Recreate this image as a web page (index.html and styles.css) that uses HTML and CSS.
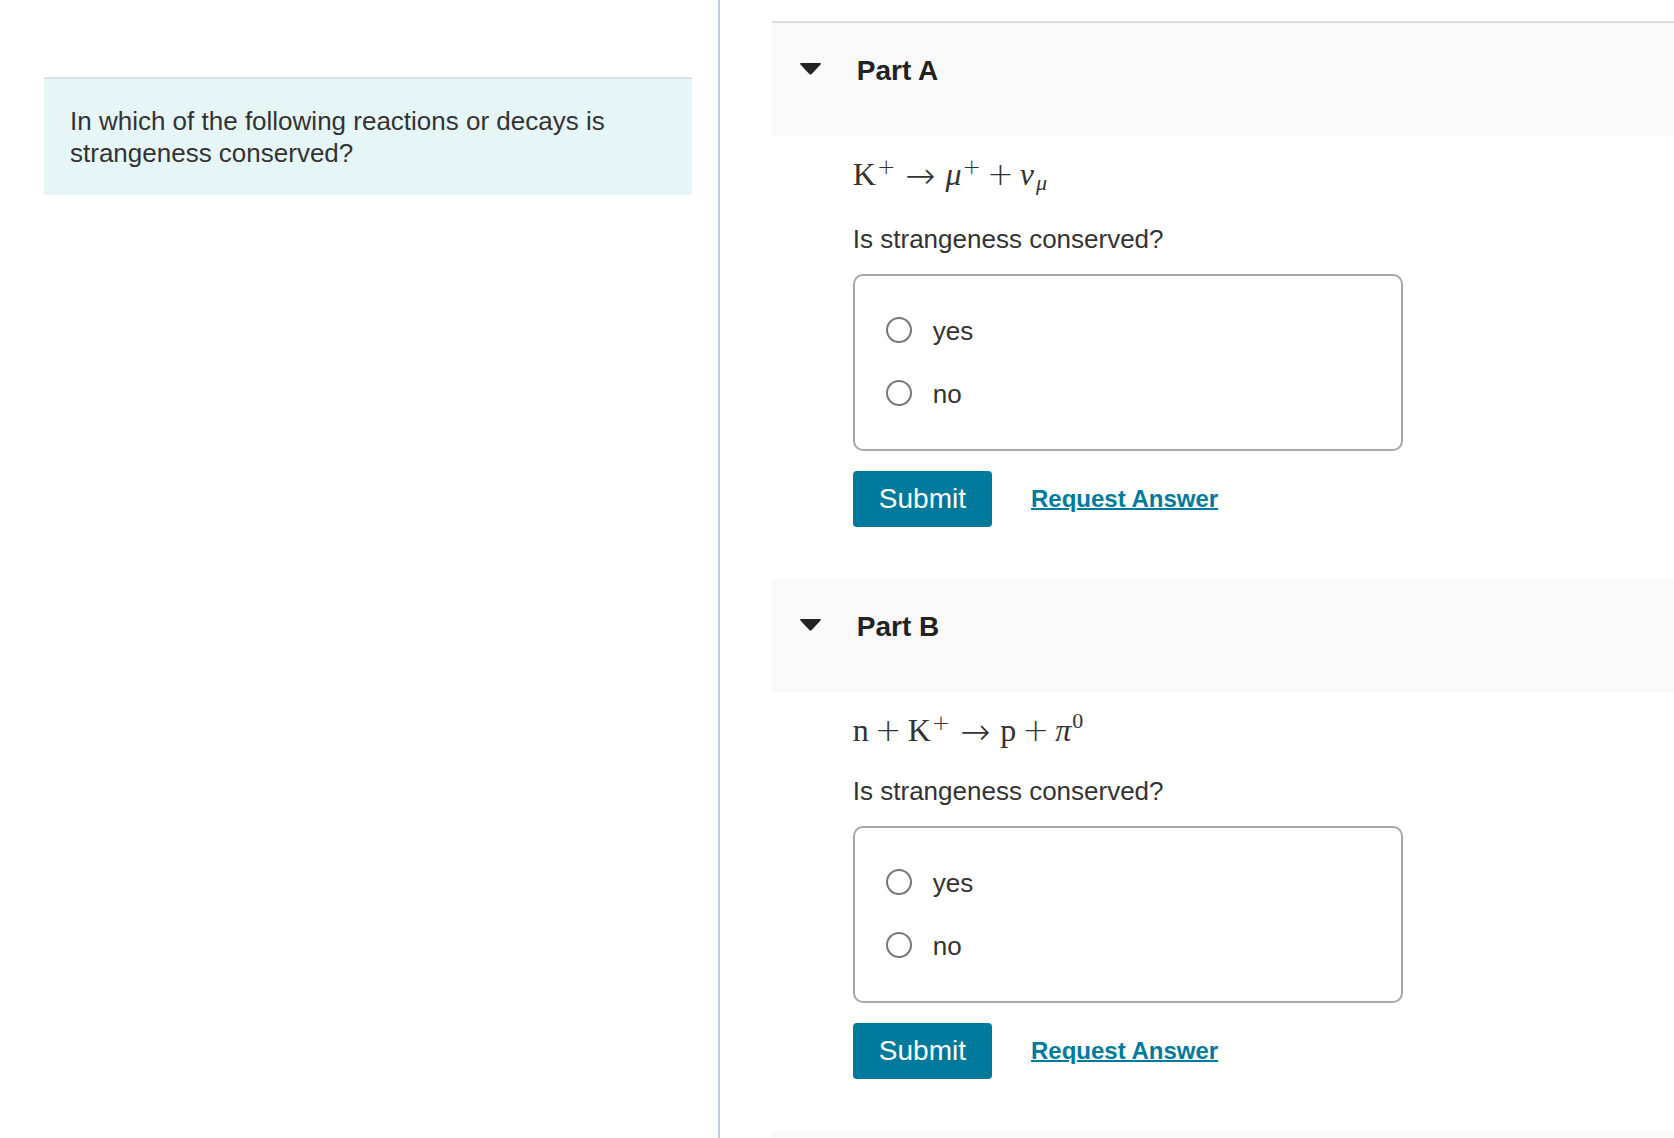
FILE: index.html
```html
<!DOCTYPE html>
<html lang="en">
<head>
<meta charset="utf-8">
<meta name="viewport" content="width=device-width, initial-scale=1">
<title>Strangeness conservation</title>
<link rel="stylesheet" href="styles.css">
</head>
<body>
<div class="layout">
  <aside class="prompt-pane">
    <p class="prompt">In which of the following reactions or decays is strangeness conserved?</p>
  </aside>
  <main class="parts-pane">
    <section class="part">
      <header class="part-header part-header-first">
        <button class="toggle" type="button" aria-label="Collapse Part A" aria-expanded="true">
          <svg class="caret" viewBox="0 0 21 12" aria-hidden="true"><path d="M1 0H20Q21.500 .3 20.500 1.500L11.500 11.200Q10.500 12 9.500 11.200L.5 1.500Q-.5 .3 1 0Z"/></svg>
        </button>
        <h2 class="part-title">Part A</h2>
      </header>
      <div class="part-body">
        <p class="formula formula-sub"><span>K</span><sup class="sign">+</sup><span class="arrow">→</span><i>μ</i><sup class="sign">+</sup><span class="plus">+</span><i>ν</i><sub><i>μ</i></sub></p>
        <form>
          <p class="question" id="question-a">Is strangeness conserved?</p>
          <div class="choices" role="radiogroup" aria-labelledby="question-a">
            <label class="choice"><input class="radio" type="radio" name="a" value="yes">yes</label>
            <label class="choice"><input class="radio" type="radio" name="a" value="no">no</label>
          </div>
          <div class="actions">
            <button class="submit" type="button">Submit</button>
            <a class="request" href="#">Request Answer</a>
          </div>
        </form>
      </div>
    </section>
    <section class="part">
      <header class="part-header">
        <button class="toggle" type="button" aria-label="Collapse Part B" aria-expanded="true">
          <svg class="caret" viewBox="0 0 21 12" aria-hidden="true"><path d="M1 0H20Q21.500 .3 20.500 1.500L11.500 11.200Q10.500 12 9.500 11.200L.5 1.500Q-.5 .3 1 0Z"/></svg>
        </button>
        <h2 class="part-title">Part B</h2>
      </header>
      <div class="part-body">
        <p class="formula"><span>n</span><span class="plus">+</span><span>K</span><sup class="sign">+</sup><span class="arrow">→</span><span>p</span><span class="plus">+</span><i>π</i><sup>0</sup></p>
        <form>
          <p class="question" id="question-b">Is strangeness conserved?</p>
          <div class="choices" role="radiogroup" aria-labelledby="question-b">
            <label class="choice"><input class="radio" type="radio" name="b" value="yes">yes</label>
            <label class="choice"><input class="radio" type="radio" name="b" value="no">no</label>
          </div>
          <div class="actions">
            <button class="submit" type="button">Submit</button>
            <a class="request" href="#">Request Answer</a>
          </div>
        </form>
      </div>
    </section>
    <div class="part-header"></div>
  </main>
</div>
</body>
</html>
```
FILE: styles.css
```css
* {
  box-sizing: border-box;
}

body {
  margin: 0;
  background: #fff;
  color: #333;
  font-family: "Liberation Sans", Arial, sans-serif;
  font-size: 26px;
  line-height: 32px;
}

p,
h2 {
  margin: 0;
}

.layout {
  display: flex;
  height: 100vh;
}

.prompt-pane {
  flex: 0 0 43%;
  padding: 77px 26px 0 44px;
  border-right: 2px solid #b9cbdf;
}

.prompt {
  padding: 26px;
  border-top: 2px solid #ddd;
  background: #e6f6f7;
}

.parts-pane {
  flex: 1;
  min-width: 0;
  padding: 21px 0 0 52px;
  overflow-y: auto;
  scrollbar-width: none;
}

.part-header {
  display: flex;
  align-items: flex-start;
  min-height: 113px;
  padding: 30px 28px;
  background: #f9f9f9;
}

.part-header-first {
  min-height: 115px;
  border-top: 2px solid #ddd;
}

.toggle {
  display: flex;
  align-items: center;
  height: 32px;
  padding: 0;
  border: 0;
  background: none;
  cursor: pointer;
}

.caret {
  width: 21px;
  height: 12px;
  fill: #222;
}

.part-title {
  margin-left: 36px;
  color: #222;
  font-size: 28px;
  line-height: 36px;
}

.part-body {
  padding: 18px 24px 52px 81px;
}

.formula {
  display: flex;
  align-items: baseline;
  margin-bottom: 25px;
  font-family: "Liberation Serif", "Times New Roman", serif;
  font-size: 32px;
  line-height: 40px;
}

.formula-sub {
  padding-bottom: 4px;
}

.formula sup,
.formula sub {
  position: relative;
  font-size: 22px;
  line-height: 0;
  vertical-align: baseline;
}

.formula sup {
  bottom: 13px;
  margin-left: 1px;
}

.formula sub {
  top: 5px;
  margin-left: 2px;
}

.formula .sign,
.plus,
.arrow {
  font-family: "DejaVu Sans", sans-serif;
  font-weight: 200;
  line-height: 0;
}

.formula .sign {
  bottom: 11px;
}

.plus {
  margin: 0 6px;
}

.arrow {
  position: relative;
  top: 3px;
  margin: 0 10px;
  font-size: 36px;
}

.choices {
  display: flex;
  flex-direction: column;
  gap: 31px;
  max-width: 550px;
  margin: 19px 0 20px;
  padding: 39px 31px;
  border: 2px solid #a6a6a6;
  border-radius: 10px;
}

.choice {
  display: flex;
  align-items: flex-start;
  gap: 21px;
}

.radio {
  appearance: none;
  width: 26px;
  height: 26px;
  margin: 2px 0 0;
  border: 2px solid #767676;
  border-radius: 50%;
  background: #fff;
}

.radio:checked {
  background: radial-gradient(circle, #007a9c 0 6px, #fff 7px);
}

.actions {
  display: flex;
  align-items: center;
  gap: 39px;
}

.submit {
  height: 56px;
  padding: 0 26px;
  border: 0;
  border-radius: 4px;
  background: #007a9c;
  color: #fff;
  font: 28px/36px "Liberation Sans", Arial, sans-serif;
  cursor: pointer;
}

.request {
  color: #007a9c;
  font-size: 24px;
  font-weight: bold;
  text-decoration-thickness: 2px;
}
```
